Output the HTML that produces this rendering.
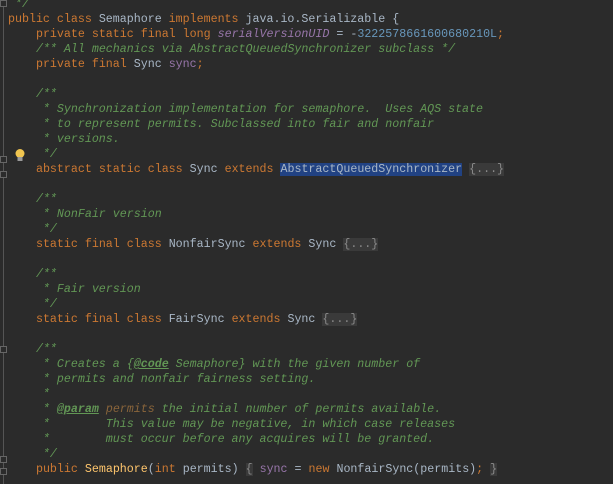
<!DOCTYPE html>
<html><head><style>
html,body{margin:0;padding:0;background:#2b2b2b;width:613px;height:484px;overflow:hidden}
pre{position:absolute;left:8px;top:-3px;margin:0;font-family:"Liberation Mono",monospace;font-size:11.65px;line-height:15px;color:#a9b7c6}
.k{color:#cc7832}.c{color:#629755;font-style:italic}.f{color:#9876aa}.fi{color:#9876aa;font-style:italic}.n{color:#6897bb}
.m{color:#ffc66d}.h{background:#214283}.fold{background:#3a3a3a;color:#8a8a8a}
.t{text-decoration:underline;font-weight:bold}.p{color:#8a653b}
.g{position:absolute;left:3px;top:0;width:1px;height:484px;background:#555}
.fm{position:absolute;left:0;width:7px;height:7px;border:1px solid #666;background:#2b2b2b;box-sizing:border-box}
</style></head><body>
<div class="g"></div>
<div class="fm" style="top:0"></div>
<div class="fm" style="top:156px"></div>
<div class="fm" style="top:171px"></div>
<div class="fm" style="top:346px"></div>
<div class="fm" style="top:456px"></div>
<div class="fm" style="top:468px"></div>
<svg style="position:absolute;left:14px;top:148px" width="12" height="15" viewBox="0 0 12 15"><circle cx="6" cy="5.5" r="4.5" fill="#f0c550"/><rect x="3.5" y="9" width="5" height="4" fill="#9a9a9a"/></svg>
<pre><span class="c"> */</span>
<span class="k">public class</span> Semaphore <span class="k">implements</span> java.io.Serializable {
    <span class="k">private static final long</span> <span class="fi">serialVersionUID</span> = -<span class="n">3222578661600680210L</span><span class="k">;</span>
    <span class="c">/** All mechanics via AbstractQueuedSynchronizer subclass */</span>
    <span class="k">private final</span> Sync <span class="f">sync</span><span class="k">;</span>

    <span class="c">/**</span>
<span class="c">     * Synchronization implementation for semaphore.  Uses AQS state</span>
<span class="c">     * to represent permits. Subclassed into fair and nonfair</span>
<span class="c">     * versions.</span>
<span class="c">     */</span>
    <span class="k">abstract static class</span> Sync <span class="k">extends</span> <span class="h">AbstractQueuedSynchronizer</span> <span class="fold">{...}</span>

    <span class="c">/**</span>
<span class="c">     * NonFair version</span>
<span class="c">     */</span>
    <span class="k">static final class</span> NonfairSync <span class="k">extends</span> Sync <span class="fold">{...}</span>

    <span class="c">/**</span>
<span class="c">     * Fair version</span>
<span class="c">     */</span>
    <span class="k">static final class</span> FairSync <span class="k">extends</span> Sync <span class="fold">{...}</span>

    <span class="c">/**</span>
<span class="c">     * Creates a {<span class="t">@code</span> Semaphore} with the given number of</span>
<span class="c">     * permits and nonfair fairness setting.</span>
<span class="c">     *</span>
<span class="c">     * <span class="t">@param</span> <span class="p">permits</span> the initial number of permits available.</span>
<span class="c">     *        This value may be negative, in which case releases</span>
<span class="c">     *        must occur before any acquires will be granted.</span>
<span class="c">     */</span>
    <span class="k">public</span> <span class="m">Semaphore</span>(<span class="k">int</span> permits) <span class="fold">{</span> <span class="f">sync</span> = <span class="k">new</span> NonfairSync(permits)<span class="k">;</span> <span class="fold">}</span>
</pre>
</body></html>
